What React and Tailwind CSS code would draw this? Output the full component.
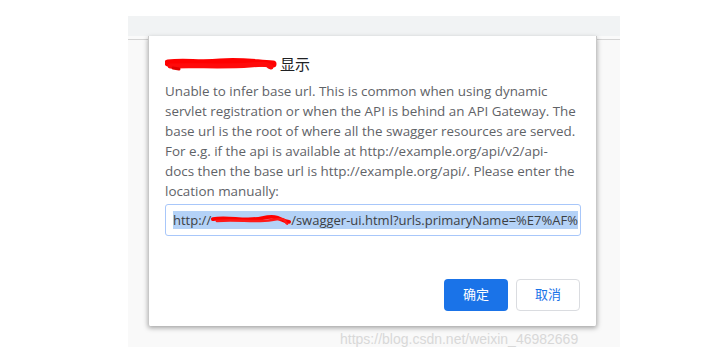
import React from "react";

export default function App() {
  const font = { fontFamily: '"Open Sans", "Noto Sans CJK SC", sans-serif' };
  return (
    <div className="relative w-[702px] h-[347px] bg-white overflow-hidden" style={font}>
      <div className="ml-[128px] mt-[16px] w-[492px] h-[331px] flex flex-col">
        <div className="h-[20px] bg-[#f1f3f4]" />
        <div className="h-[3px] bg-[#fafafa]" />
        <div className="flex-1 bg-[#f9f9f9] border-t border-[#d4d4d4]" />
      </div>

      <div className="absolute left-[148px] top-[36px] w-[449px] h-[290px] bg-white rounded-b-[2px] shadow-[0_2px_5px_rgba(0,0,0,0.35)] border-l border-r border-[#c8c8c8] flex flex-col px-[16px] pt-[17px] pb-[15px]">
        <div className="flex items-center h-[22px] text-[15px] text-[#202124]">
          <svg width="112" height="16" viewBox="0 0 112 16" className="inline-block">
            <path d="M3 7 C 20 5, 35 8, 55 6 S 90 7, 108 8" stroke="#ff0000" strokeWidth="7" fill="none" strokeLinecap="round" />
            <path d="M5 10 C 30 9, 60 11, 85 9 S 100 10, 106 11" stroke="#ff0a0a" strokeWidth="5" fill="none" strokeLinecap="round" />
            <path d="M8 12 L 14 13" stroke="#e00000" strokeWidth="3" fill="none" strokeLinecap="round" />
          </svg>
          <span className="ml-[3px]">显示</span>
        </div>
        <p className="mt-[6px] text-[13.4px] leading-[20px] text-[#5f6368] pr-[4px]">
          Unable to infer base url. This is common when using dynamic servlet registration or when the API is behind an API Gateway. The base url is the root of where all the swagger resources are served. For e.g. if the api is available at http://example.org/api/v2/api-docs then the base url is http://example.org/api/. Please enter the location manually:
        </p>
        <div className="mt-[3px] h-[32px] w-[416px] border border-[#a8c7fa] rounded-[3px] flex items-center pl-[7px] overflow-hidden whitespace-nowrap text-[13px] text-[#3c4043]">
          <span className="bg-[#b4d2f7] leading-[18px] flex items-center">
            http://
            <span className="relative inline-block w-[80px] h-[18px]">
              <span className="absolute inset-0 flex items-center">
                <svg width="84" height="14" viewBox="0 0 84 14">
                  <path d="M2 6 C 18 3, 36 9, 54 5 S 72 8, 82 9" stroke="#ff0000" strokeWidth="4" fill="none" strokeLinecap="round" />
                  <path d="M6 8 C 28 6, 46 10, 64 7 S 76 9, 80 11" stroke="#ff1a1a" strokeWidth="2.5" fill="none" strokeLinecap="round" />
                </svg>
              </span>
            </span>
            /swagger-ui.html?urls.primaryName=%E7%AF%
          </span>
        </div>
        <div className="flex-1" />
        <div className="flex justify-end gap-[8px]">
          <button className="w-[64px] h-[32px] rounded-[4px] bg-[#1a73e8] text-white text-[13px]">确定</button>
          <button className="w-[64px] h-[32px] rounded-[4px] bg-white border border-[#dadce0] text-[#1a73e8] text-[13px]">取消</button>
        </div>
      </div>

      <div className="absolute left-[340px] top-[329px] text-[14px] text-[#d8d8d8] whitespace-nowrap" style={{ fontFamily: '"Liberation Sans", sans-serif' }}>
        https://blog.csdn.net/weixin_46982669
      </div>
    </div>
  );
}
